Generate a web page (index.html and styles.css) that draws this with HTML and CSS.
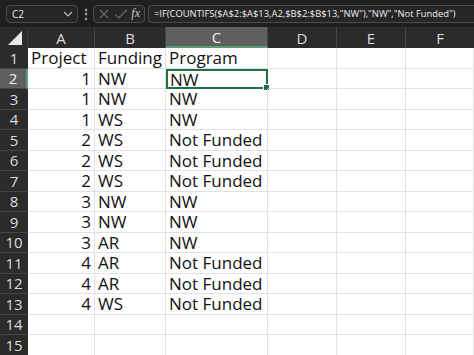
FILE: index.html
```html
<!DOCTYPE html>
<html>
<head>
<meta charset="utf-8">
<link rel="stylesheet" href="styles.css">
</head>
<body>
<div class="toolbar">
  <div class="namebox"><span>C2</span><svg class="chev" width="10" height="6" viewBox="0 0 10 6"><path d="M1 1 L5 5 L9 1" fill="none" stroke="#bdbdbd" stroke-width="1.2"/></svg></div>
  <div class="dots">⋮</div>
  <div class="fxbox">
    <svg width="12" height="12" viewBox="0 0 12 12"><path d="M2 2 L10 10 M10 2 L2 10" stroke="#6a6a6a" stroke-width="1.2"/></svg>
    <svg width="14" height="12" viewBox="0 0 14 12"><path d="M1.5 6.5 L5 10 L12.5 2" fill="none" stroke="#6a6a6a" stroke-width="1.2"/></svg>
    <span class="fx">fx</span>
  </div>
  <div class="formula">=IF(COUNTIFS($A$2:$A$13,A2,$B$2:$B$13,"NW"),"NW","Not Funded")</div>
</div>
<div class="sheet">
  <div class="corner"><svg width="27" height="20" viewBox="0 0 27 20"><path d="M22 4 L22 18 L8 18 Z" fill="#e8e8e8"/></svg></div>
  <div class="ch">A</div><div class="ch">B</div><div class="ch sel">C</div><div class="ch">D</div><div class="ch">E</div><div class="ch last">F</div>

  <div class="rh">1</div><div class="c">Project</div><div class="c">Funding</div><div class="c">Program</div><div class="c"></div><div class="c"></div><div class="c"></div>
  <div class="rh sel">2</div><div class="c n">1</div><div class="c">NW</div><div class="c active">NW<span class="handle"></span></div><div class="c"></div><div class="c"></div><div class="c"></div>
  <div class="rh">3</div><div class="c n">1</div><div class="c">NW</div><div class="c">NW</div><div class="c"></div><div class="c"></div><div class="c"></div>
  <div class="rh">4</div><div class="c n">1</div><div class="c">WS</div><div class="c">NW</div><div class="c"></div><div class="c"></div><div class="c"></div>
  <div class="rh">5</div><div class="c n">2</div><div class="c">WS</div><div class="c">Not Funded</div><div class="c"></div><div class="c"></div><div class="c"></div>
  <div class="rh">6</div><div class="c n">2</div><div class="c">WS</div><div class="c">Not Funded</div><div class="c"></div><div class="c"></div><div class="c"></div>
  <div class="rh">7</div><div class="c n">2</div><div class="c">WS</div><div class="c">Not Funded</div><div class="c"></div><div class="c"></div><div class="c"></div>
  <div class="rh">8</div><div class="c n">3</div><div class="c">NW</div><div class="c">NW</div><div class="c"></div><div class="c"></div><div class="c"></div>
  <div class="rh">9</div><div class="c n">3</div><div class="c">NW</div><div class="c">NW</div><div class="c"></div><div class="c"></div><div class="c"></div>
  <div class="rh">10</div><div class="c n">3</div><div class="c">AR</div><div class="c">NW</div><div class="c"></div><div class="c"></div><div class="c"></div>
  <div class="rh">11</div><div class="c n">4</div><div class="c">AR</div><div class="c">Not Funded</div><div class="c"></div><div class="c"></div><div class="c"></div>
  <div class="rh">12</div><div class="c n">4</div><div class="c">AR</div><div class="c">Not Funded</div><div class="c"></div><div class="c"></div><div class="c"></div>
  <div class="rh">13</div><div class="c n">4</div><div class="c">WS</div><div class="c">Not Funded</div><div class="c"></div><div class="c"></div><div class="c"></div>
  <div class="rh">14</div><div class="c"></div><div class="c"></div><div class="c"></div><div class="c"></div><div class="c"></div><div class="c"></div>
  <div class="rh">15</div><div class="c"></div><div class="c"></div><div class="c"></div><div class="c"></div><div class="c"></div><div class="c"></div>
</div>
</body>
</html>
```
FILE: styles.css
```css
html, body {
  margin: 0;
  padding: 0;
  width: 474px;
  height: 355px;
  overflow: hidden;
  background: #ffffff;
  font-family: "Open Sans", "Noto Sans", sans-serif;
}
.toolbar {
  height: 27px;
  background: #1f1f1f;
  display: flex;
  align-items: center;
  padding-left: 6px;
  box-sizing: border-box;
}
.namebox {
  width: 72px;
  height: 18px;
  box-sizing: border-box;
  border: 1px solid #4a4a4a;
  border-radius: 4px;
  background: #262626;
  display: flex;
  align-items: center;
  justify-content: space-between;
  padding: 0 4px 0 5px;
  color: #e6e6e6;
  font-size: 10px;
}
.dots {
  width: 15px;
  text-align: center;
  color: #b0b0b0;
  font-size: 12px;
  font-weight: bold;
}
.fxbox {
  width: 52px;
  height: 18px;
  box-sizing: border-box;
  border: 1px solid #4a4a4a;
  border-radius: 4px;
  background: #262626;
  display: flex;
  align-items: center;
  justify-content: space-between;
  padding: 0 4px 0 4px;
}
.fx {
  font-family: "Liberation Serif", serif;
  font-style: italic;
  color: #c8c8c8;
  font-size: 12px;
}
.formula {
  margin-left: 3px;
  flex: 1;
  height: 18px;
  box-sizing: border-box;
  border: 1px solid #4a4a4a;
  border-right: none;
  border-radius: 4px 0 0 4px;
  background: #262626;
  color: #ececec;
  font-size: 9.4px;
  line-height: 16px;
  padding-left: 5px;
  white-space: nowrap;
  overflow: hidden;
}
.sheet {
  display: grid;
  grid-template-columns: 28px 67px 71px 102px 69px 69px 68px;
  grid-template-rows: 21px repeat(15, 20.5px);
}
.corner {
  background: #2b2b2b;
  border-right: 1px solid #3c3c3c;
  box-sizing: border-box;
  overflow: hidden;
}
.ch {
  background: #2b2b2b;
  color: #dcdcdc;
  font-size: 15px;
  display: flex;
  align-items: center;
  justify-content: center;
  border-right: 1px solid #454545;
  box-sizing: border-box;
}
.ch.last { border-right: none; }
.ch.sel {
  background: #5f5f5f;
  color: #f0f0f0;
  border-bottom: 2px solid #5e9c76;
}
.rh {
  background: #2b2b2b;
  color: #dcdcdc;
  font-size: 15px;
  display: flex;
  align-items: center;
  justify-content: center;
  border-bottom: 1px solid #454545;
  box-sizing: border-box;
}
.rh.sel {
  background: #5f5f5f;
  color: #f0f0f0;
  border-right: 2px solid #5e9c76;
}
.c {
  position: relative;
  border-right: 1px solid #e1e1e1;
  border-bottom: 1px solid #e1e1e1;
  box-sizing: border-box;
  font-size: 17px;
  color: #111111;
  line-height: 19px;
  padding: 0 3px;
  white-space: nowrap;
}
.c.n { text-align: right; }
.c.active {
  border: 2px solid #1f7145;
  line-height: 17px;
  padding-left: 2px;
}
.handle {
  position: absolute;
  right: -4px;
  bottom: -4px;
  width: 5px;
  height: 5px;
  background: #1f7145;
  border: 1px solid #fff;
}
```
